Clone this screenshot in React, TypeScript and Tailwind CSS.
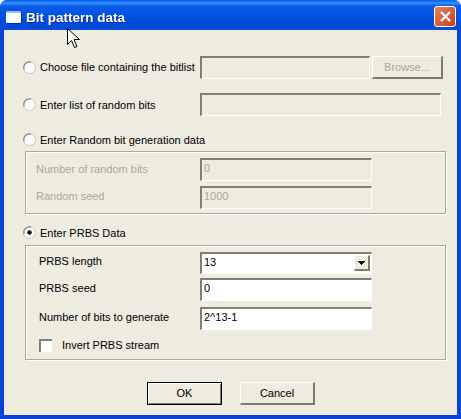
const font = { fontFamily: '"Liberation Sans", sans-serif' };

function Radio({ checked }: { checked?: boolean }) {
  return (
    <svg width="13" height="13" viewBox="0 0 13 13" className="shrink-0">
      <circle cx="6.5" cy="6.5" r="6" fill="#ffffff" stroke="#c9c6b6" strokeWidth="1" />
      <path d="M1.2 8.2A5.5 5.5 0 0 1 8.2 1.2" fill="none" stroke="#8a8678" strokeWidth="1.2" />
      {checked && <circle cx="6.5" cy="6.5" r="2.2" fill="#000000" />}
    </svg>
  );
}

function Field({ value, width, disabled, h = "h-[23px]" }: { value?: string; width: string; disabled?: boolean; h?: string }) {
  return (
    <div
      className={`${width} ${h} shrink-0 flex items-center pl-[2px] pb-[3px] border-t-2 border-l-2 border-r border-b border-t-[#827e70] border-l-[#827e70] border-r-white border-b-white text-[11px] leading-none ${disabled ? "bg-[#eeebdf] text-[#aca899]" : "bg-white text-black"}`}
    >
      {value}
    </div>
  );
}

function Button({ label, isDefault }: { label: string; isDefault?: boolean }) {
  return (
    <div
      className={`flex items-center justify-center h-[23px] w-[75px] bg-[#eeebdf] text-black ${
        isDefault
          ? "border border-black shadow-[inset_1px_1px_0_#fff,inset_-1px_-1px_0_#7f7b6e]"
          : "border-t border-l border-white border-r-2 border-b-2 border-r-[#7f7b6e] border-b-[#7f7b6e]"
      }`}
    >
      {label}
    </div>
  );
}

export default function App() {
  return (
    <div
      className="w-[461px] h-[419px] relative overflow-hidden flex flex-col rounded-t-[7px] bg-[#0842d8] text-[11px] text-black"
      style={font}
    >
      <div className="h-[30px] shrink-0 flex items-center pt-[3px] pl-[6px] pr-[5px] bg-[linear-gradient(to_bottom,#0058ee_0,#3593ff_3px,#0a5ce8_6px,#0053e0_15px,#0048d8_27px,#0352d8_30px)]">
        <div className="w-[15px] h-[12px] bg-white rounded-[1px] border-t-2 border-[#9dbcf0] shadow-[1px_1px_0_#0a2f9a]" />
        <span className="ml-[5px] mt-[3px] text-[13.5px] font-bold text-white drop-shadow-[1px_1px_0_#0a2f9a]">
          Bit pattern data
        </span>
        <div className="ml-auto w-[22px] h-[21px] rounded-[3px] border border-white bg-gradient-to-br from-[#e8805c] to-[#c63f1c] flex items-center justify-center">
          <svg width="13" height="13" viewBox="0 0 13 13">
            <path d="M2 2L11 11M11 2L2 11" stroke="#ffffff" strokeWidth="2.4" />
          </svg>
        </div>
      </div>

      <div className="mx-[4px] h-[385px] bg-[#eeebdf] pl-[19px] pt-[26px] flex flex-col">
        <div className="flex items-center h-[23px]">
          <Radio />
          <span className="ml-[4px] w-[160px] whitespace-nowrap">Choose file containing the bitlist</span>
          <Field width="w-[170px]" disabled />
          <div className="ml-[2px] w-[71px] h-[23px] flex items-center justify-center border-t border-l border-white border-r-2 border-b-2 border-r-[#7f7b6e] border-b-[#7f7b6e] text-[#aca899]">
            Browse...
          </div>
        </div>

        <div className="flex items-center h-[23px] mt-[14px]">
          <Radio />
          <span className="ml-[4px] mt-[2px] w-[160px] whitespace-nowrap">Enter list of random bits</span>
          <Field width="w-[241px]" disabled />
        </div>

        <div className="flex items-center h-[13px] mt-[17px]">
          <Radio />
          <span className="ml-[4px] mt-[2px] whitespace-nowrap">Enter Random bit generation data</span>
        </div>

        <div className="ml-[2px] mt-[5px] w-[421px] h-[63px] border border-[#aca899] shadow-[1px_1px_0_#fff,inset_1px_1px_0_#fff] pl-[10px] pt-[6px] flex flex-col gap-[5px] text-[#aca899]">
          <div className="flex items-center">
            <span className="w-[164px]">Number of random bits</span>
            <Field width="w-[172px]" value="0" disabled />
          </div>
          <div className="flex items-center">
            <span className="w-[164px] mb-[2px]">Random seed</span>
            <Field width="w-[172px]" value="1000" disabled />
          </div>
        </div>

        <div className="flex items-center h-[13px] mt-[12px]">
          <Radio checked />
          <span className="ml-[4px] mt-[2px] whitespace-nowrap">Enter PRBS Data</span>
        </div>

        <div className="ml-[2px] mt-[6px] w-[421px] h-[115px] border border-[#aca899] shadow-[1px_1px_0_#fff,inset_1px_1px_0_#fff] pl-[13px] pt-[6px] flex flex-col">
          <div className="flex items-center">
            <span className="w-[161px] mb-[3px]">PRBS length</span>
            <div className="relative">
              <Field width="w-[172px]" h="h-[22px]" value="13" />
              <div className="absolute right-[2px] top-[3px] w-[16px] h-[16px] bg-[#eeebdf] border-t border-l border-white border-r-2 border-b-2 border-r-[#7f7b6e] border-b-[#7f7b6e] flex items-center justify-center">
                <svg width="7" height="4" viewBox="0 0 7 4">
                  <path d="M0 0H7V1H6V2H5V3H4V4H3V3H2V2H1V1H0Z" fill="#000" />
                </svg>
              </div>
            </div>
          </div>
          <div className="flex items-center mt-[4px]">
            <span className="w-[161px] mb-[3px]">PRBS seed</span>
            <Field width="w-[172px]" value="0" />
          </div>
          <div className="flex items-center mt-[6px]">
            <span className="w-[161px] mb-[2px]">Number of bits to generate</span>
            <Field width="w-[172px]" value="2^13-1" />
          </div>
          <div className="flex items-center h-[13px] mt-[9px]">
            <div className="w-[13px] h-[13px] bg-white border-t-2 border-l-2 border-t-[#827e70] border-l-[#827e70]" />
            <span className="ml-[10px]">Invert PRBS stream</span>
          </div>
        </div>

        <div className="flex gap-[18px] ml-[124px] mt-[22px]">
          <Button label="OK" isDefault />
          <Button label="Cancel" />
        </div>
      </div>

      <svg className="absolute left-[67px] top-[28px]" width="13" height="21" viewBox="0 0 13 21">
        <path d="M0.5 0.5V16.5L4.5 12.5L7.5 19.5L10 18.5L7 11.5H12.5Z" fill="#ffffff" stroke="#000000" strokeWidth="1" />
      </svg>
    </div>
  );
}
